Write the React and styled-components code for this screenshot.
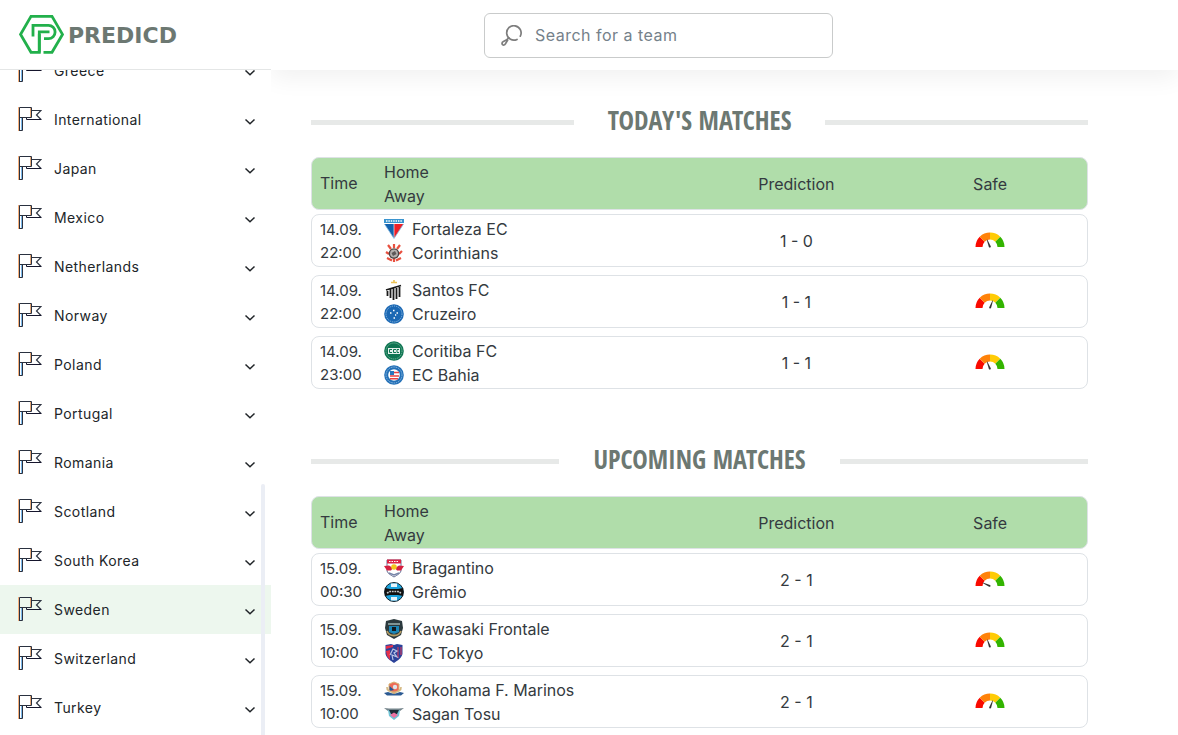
import React, { useLayoutEffect, useRef } from 'react'
import styled, { createGlobalStyle } from 'styled-components'


const GlobalStyle = createGlobalStyle`
  *, *::before, *::after {
    box-sizing: border-box;
  }

  body {
    margin: 0;
    background: #fff;
    color: #343a40;
    font-family: Inter, "Liberation Sans", sans-serif;
    font-size: 16px;
    line-height: 24px;
  }

  button, input {
    font: inherit;
    color: inherit;
  }
`

const Page = styled.div`
  display: grid;
  grid-template-columns: 271px minmax(0, 1fr);
  grid-template-rows: 70px minmax(0, 1fr);
  height: 100vh;
  overflow: hidden;
`

const Brand = styled.a`
  display: flex;
  align-items: center;
  padding-left: 19px;
  border-bottom: 1px solid #e4e6e6;
  background: #fff;
  z-index: 2;
`

const TopBar = styled.header`
  display: flex;
  align-items: center;
  padding: 0 24px 0 213px;
  background: #fff;
  box-shadow: 0 8px 24px rgba(0, 0, 0, 0.06);
  z-index: 1;
`

const SearchBox = styled.label`
  display: flex;
  align-items: center;
  gap: 13px;
  width: 349px;
  height: 45px;
  padding: 0 16px;
  border: 1px solid #c9cbcb;
  border-radius: 6px;
  color: #7d7d7d;
`

const SearchInput = styled.input`
  flex: 1;
  min-width: 0;
  padding: 0;
  border: 0;
  outline: 0;
  background: none;
  letter-spacing: 0.03em;

  &::placeholder {
    color: #75818a;
    opacity: 1;
  }
`

const Sidebar = styled.nav`
  position: relative;
  background: #fff;
  min-height: 0;
  z-index: 2;
`

const CountryList = styled.ul`
  height: 100%;
  margin: 0;
  padding: 0 0 16px;
  list-style: none;
  overflow-y: auto;
  scrollbar-width: none;
`

const CountryButton = styled.button`
  display: grid;
  grid-template-columns: 24px 1fr 12px;
  align-items: center;
  gap: 12px;
  width: 100%;
  height: 49px;
  padding: 0 15px 0 18px;
  border: 0;
  background: ${(props) => (props.$active ? '#edf7ee' : 'transparent')};
  color: #212529;
  font-size: 14px;
  letter-spacing: 0.03em;
  text-align: left;
`

const ScrollThumb = styled.div`
  position: absolute;
  right: 6px;
  bottom: 0;
  width: 4px;
  height: 251px;
  border-radius: 4px 4px 0 0;
  background: #ebeef5;
`

const Main = styled.main`
  display: flex;
  flex-direction: column;
  gap: 52px;
  padding: 32px 90px 0 40px;
  overflow: hidden;
`

const SectionTitle = styled.h2`
  display: flex;
  align-items: center;
  gap: 34px;
  height: 36px;
  margin: 0 0 19px;
  color: #6c7872;
  font-family: "Open Sans Condensed", "Liberation Sans Narrow", "Open Sans", sans-serif;
  font-size: 26px;
  font-weight: 700;
  line-height: 36px;
  text-transform: uppercase;

  &::before, &::after {
    content: '';
    flex: 1;
    height: 5px;
    margin-top: 4px;
    background: #e7e9e8;
  }
`

const Table = styled.table`
  display: grid;
  gap: 4px;

  thead {
    display: block;
  }

  tbody {
    display: grid;
    gap: 8px;
  }
`

const Row = styled.tr`
  display: grid;
  grid-template-columns: 72px 1fr 25% 25%;
  align-items: center;
  height: 53px;
  border: 1px solid #dee2e6;
  border-radius: 8px;
  background: ${(props) => (props.$head ? '#b0ddaa' : '#fff')};
`

const Cell = styled.td`
  display: flex;
  flex-direction: column;
  padding: 0;
  font-weight: 400;
  text-align: left;
`

const TimeCell = styled(Cell)`
  padding-left: 8px;
  font-size: ${(props) => (props.$head ? '16px' : '15px')};
  line-height: 23px;
`

const CenterCell = styled(Cell)`
  align-items: center;
`

const Team = styled.div`
  display: flex;
  align-items: center;
  gap: 8px;
`

const FlagIcon = () => (
  <svg width="24" height="25" viewBox="0 0 24 25" fill="none" strokeWidth="1">
    <path d="M0.5 0V24" stroke="#f6b07c" />
    <path d="M3.5 11V23" stroke="#7db9ea" />
    <path d="M12.5 1V10" stroke="#e3a878" />
    <path d="M1.5 24V0.5H13.5V10.5H1.5M4.5 11V23.5H1" stroke="#2a3140" />
    <path d="M14 3.5H23L18.5 8L23 12.5" stroke="#2f3542" strokeWidth="1.2" />
    <path d="M23.5 12.5H8.5V11" stroke="#15152c" />
  </svg>
)

const Chevron = () => (
  <svg width="12" height="12" viewBox="0 0 12 12" fill="none" stroke="#212529" strokeWidth="1.5">
    <path d="M1.5 5.5L6 9.8L10.5 5.5" />
  </svg>
)

const SearchIcon = () => (
  <svg width="21" height="21" viewBox="0 0 21 21" fill="none" stroke="currentColor" strokeWidth="1.7" strokeLinecap="round">
    <path d="M19.3 11.2A7.2 7.2 0 1 0 16 14.4" />
    <path d="M7.8 12.8L5.9 14.7M5.7 14.8L2 16.8A1.7 1.7 0 1 0 4.3 19L6.5 15.5Z" />
  </svg>
)

const Logo = () => (
  <svg width="170" height="42" viewBox="0 0 170 42" role="img" aria-label="Predicd">
    <g fill="none" stroke="#22b04b" strokeWidth="2.8">
      <path d="M20.3 20V38.3H12L1.6 20.4L12 2.3H33L43.5 20.4L33 38.3H24.5" />
      <path d="M14 22.5V11.4H29.5A6.6 6.6 0 0 1 29.5 24.6H25" />
      <path d="M20.3 38.5V17.8H30.5" />
    </g>
    <text x="49" y="29" fill="#6c7872" fontFamily="DejaVu Sans, sans-serif" fontSize="22" fontWeight="700">PREDICD</text>
  </svg>
)

const crests = {
  fortaleza: (
    <>
      <path d="M0 0H20V4H0Z" fill="#3a94cf" />
      <path d="M2 2H18" stroke="#fff" strokeWidth="1.4" strokeDasharray="1.4 1" />
      <path d="M0.5 5H9.7V19Z" fill="#1262ae" />
      <path d="M10.3 5H19.5L10.3 19Z" fill="#ee2028" />
      <path d="M0.5 5L10 19.5L19.5 5" fill="none" stroke="#7db4dd" strokeWidth="0.8" />
    </>
  ),
  corinthians: (
    <>
      <path d="M4 2L7 6M16 2L13 6M10 1V5M2 9L5 11M18 8L15 11M3 15L8 17.5M17 15L12 17.5M10 15V19" stroke="#e8503f" strokeWidth="2.2" />
      <circle cx="10" cy="10.5" r="5.3" fill="#4a4444" />
      <circle cx="10" cy="10.5" r="3.9" fill="#b5b0ae" />
      <path d="M7.5 10L11 8L12.5 11L9 13Z" fill="#5d5858" />
    </>
  ),
  santos: (
    <>
      <path d="M7 2.5H13M10 0V3" stroke="#ecc255" strokeWidth="1.6" />
      <path d="M3 6H17V11C17 16 14 18 10 20C6 18 3 16 3 11Z" fill="#fff" />
      <path d="M2 10L17 5.5M3.5 11V16M6.5 9V18M9.5 8V20M12.5 8V19M15.5 7V17" stroke="#191919" strokeWidth="1.8" />
    </>
  ),
  cruzeiro: (
    <>
      <circle cx="10" cy="10" r="9.8" fill="#1b68b4" />
      <circle cx="10" cy="10" r="8" fill="none" stroke="#8fbce2" strokeWidth="1" strokeDasharray="1.2 1" />
      <path d="M9 6.5h1.5M6 9h1.5M12.5 9h1.5M9.5 14h1.5M11 11h1.2" stroke="#fff" strokeWidth="1.5" />
    </>
  ),
  coritiba: (
    <>
      <circle cx="10" cy="10" r="9.8" fill="#0f7552" />
      <circle cx="10" cy="10" r="8" fill="none" stroke="#6fb59a" strokeDasharray="1.3 0.8" />
      <path d="M4 7H16V13H4Z" fill="#e5f1ec" />
      <path d="M8 8.5H5.5V11.5H8M12 8.5H9.5V11.5H12M15 8.5H13V11.5H15" fill="none" stroke="#0f7552" />
    </>
  ),
  bahia: (
    <>
      <circle cx="10" cy="10" r="9.8" fill="#2370b7" />
      <circle cx="10" cy="10" r="8" fill="none" stroke="#8ebbe2" strokeDasharray="1.4 0.9" />
      <circle cx="10" cy="10" r="5.8" fill="#fff" />
      <path d="M6 6H10V10H6Z" fill="#2677be" />
      <path d="M10 7.5H15M6 11H15M6 13.8H14" stroke="#e84343" strokeWidth="1.5" />
    </>
  ),
  bragantino: (
    <>
      <path d="M3 2H17V13C16 16 13 17 10 19C7 17 4 16 3 13Z" fill="#fff" stroke="#59618a" strokeWidth="0.9" />
      <path d="M3 1.5H17V5.5H3Z" fill="#de2444" />
      <path d="M5 3.5H15" stroke="#fff" strokeWidth="1.2" strokeDasharray="1.5 1" />
      <path d="M0 8L5 7.5L9 10L7 12.5H3ZM20 8L15 7.5L11 10L13 12.5H17Z" fill="#d5203f" />
      <circle cx="10" cy="9" r="2.8" fill="#f4c51c" />
      <path d="M5 15L10 17L15 15" fill="none" stroke="#7685a8" strokeWidth="1.5" />
    </>
  ),
  gremio: (
    <>
      <circle cx="10" cy="10" r="9.5" fill="#1ba2dc" stroke="#17222b" />
      <path d="M7 1.5H13V5H7ZM7 15H13V18.5H7Z" fill="#e8f4fb" />
      <path d="M1 6L6 7H14L19 6V14L14 13H6L1 14Z" fill="#111" />
      <path d="M3 11L6 9.5H14L17 11" fill="none" stroke="#c4c9cc" strokeWidth="1.7" strokeDasharray="1.8 0.8" />
    </>
  ),
  kawasaki: (
    <>
      <path d="M2 2L10 0L18 2L19 9L17 16L10 20L3 16L1 9Z" fill="#2c3a3e" />
      <path d="M4 4H16V6H4Z" fill="#7f9494" />
      <path d="M5 7H15V13L10 15L5 13Z" fill="#1a86b7" />
      <path d="M8 8H12V12H8Z" fill="#11181d" />
      <path d="M3 12C5 18 15 18 17 12" fill="none" stroke="#b39b63" strokeWidth="1.8" />
    </>
  ),
  tokyo: (
    <>
      <path d="M1.5 2L7 1L10 2L13 1L18.5 2V11C17 16 14 17 10 20C6 17 3 16 1.5 11Z" fill="#2b429a" />
      <path d="M2 3L9 2V4L2 6ZM2 8L6 7V17L3 13Z" fill="#e6304b" />
      <path d="M14 4V15M17 4V12" stroke="#c93b62" strokeWidth="1.2" />
      <path d="M6 12L9 6L13 8L10 10L13 14L8 12L9 17" fill="none" stroke="#b8c3e6" strokeWidth="1.2" />
    </>
  ),
  marinos: (
    <>
      <path d="M5 4L10 2L15 4V10L10 14L5 10Z" fill="#ee6c57" stroke="#d6b777" />
      <path d="M5.5 6L10 10L5.5 11Z" fill="#215896" />
      <circle cx="11" cy="7" r="2.2" fill="#dfe5e8" />
      <path d="M3 7C2 14 18 14 17 7" fill="none" stroke="#d4b880" strokeWidth="1.6" />
      <path d="M0 13L4 12L10 14L16 12L20 13L17 15.5H3Z" fill="#2c5a92" />
    </>
  ),
  sagan: (
    <>
      <path d="M0 4L5 4.5H15L20 4L16 7H4Z" fill="#73838a" />
      <path d="M4 6H16L15 12L10 16L5 12Z" fill="#6fc3d5" />
      <path d="M5 6H15L13 10H7Z" fill="#1d2b36" />
      <path d="M6 11L10 8.5L14 11L10 14Z" fill="#ec71a0" />
    </>
  ),
}

const Crest = ({ name }) => (
  <svg width="20" height="20" viewBox="0 0 20 20" aria-hidden="true">
    {crests[name]}
  </svg>
)

const Gauge = ({ angle }) => (
  <svg width="30" height="18" viewBox="0 0 30 18" role="img" aria-label="Safety">
    <g fill="none" strokeWidth="7">
      <path d="M4 15A11 11 0 0 1 7.2 7.2" stroke="#f90a00" />
      <path d="M7.2 7.2A11 11 0 0 1 15 4" stroke="#ff8209" />
      <path d="M15 4A11 11 0 0 1 22.8 7.2" stroke="#ffcb05" />
      <path d="M22.8 7.2A11 11 0 0 1 26 15" stroke="#33b400" />
    </g>
    <path d="M14.7 7L14 14.5A1 1 0 0 0 16 14.5L15.3 7Z" fill="#333" transform={`rotate(${angle} 15 15)`} />
  </svg>
)

const countries = [
  'Greece', 'International', 'Japan', 'Mexico', 'Netherlands', 'Norway', 'Poland',
  'Portugal', 'Romania', 'Scotland', 'South Korea', 'Sweden', 'Switzerland', 'Turkey',
]

const today = [
  { date: '14.09.', time: '22:00', home: ['Fortaleza EC', 'fortaleza'], away: ['Corinthians', 'corinthians'], score: '1 - 0', angle: -22 },
  { date: '14.09.', time: '22:00', home: ['Santos FC', 'santos'], away: ['Cruzeiro', 'cruzeiro'], score: '1 - 1', angle: 20 },
  { date: '14.09.', time: '23:00', home: ['Coritiba FC', 'coritiba'], away: ['EC Bahia', 'bahia'], score: '1 - 1', angle: -22 },
]

const upcoming = [
  { date: '15.09.', time: '00:30', home: ['Bragantino', 'bragantino'], away: ['Grêmio', 'gremio'], score: '2 - 1', angle: -66 },
  { date: '15.09.', time: '10:00', home: ['Kawasaki Frontale', 'kawasaki'], away: ['FC Tokyo', 'tokyo'], score: '2 - 1', angle: -20 },
  { date: '15.09.', time: '10:00', home: ['Yokohama F. Marinos', 'marinos'], away: ['Sagan Tosu', 'sagan'], score: '2 - 1', angle: 20 },
]

const Matches = ({ title, matches }) => (
  <section>
    <SectionTitle>{title}</SectionTitle>
    <Table>
      <thead>
        <Row $head>
          <TimeCell as="th" $head>Time</TimeCell>
          <Cell as="th">
            <span>Home</span>
            <span>Away</span>
          </Cell>
          <CenterCell as="th">Prediction</CenterCell>
          <CenterCell as="th">Safe</CenterCell>
        </Row>
      </thead>
      <tbody>
        {matches.map(({ date, time, home, away, score, angle }) => (
          <Row key={home[0]}>
            <TimeCell>
              <span>{date}</span>
              <span>{time}</span>
            </TimeCell>
            <Cell>
              {[home, away].map(([name, crest]) => (
                <Team key={name}>
                  <Crest name={crest} />
                  {name}
                </Team>
              ))}
            </Cell>
            <CenterCell>{score}</CenterCell>
            <CenterCell><Gauge angle={angle} /></CenterCell>
          </Row>
        ))}
      </tbody>
    </Table>
  </section>
)

const App = () => {
  const listRef = useRef(null)

  // open the list half a row down
  useLayoutEffect(() => {
    listRef.current.scrollTop = 24
  }, [])

  return (
    <Page>
      <GlobalStyle />
      <Brand href="#"><Logo /></Brand>
      <TopBar>
        <SearchBox>
          <SearchIcon />
          <SearchInput type="text" placeholder="Search for a team" aria-label="Search for a team" />
        </SearchBox>
      </TopBar>
      <Sidebar>
        <CountryList ref={listRef}>
          {countries.map((country) => (
            <li key={country}>
              <CountryButton type="button" $active={country === 'Sweden'}>
                <FlagIcon />
                {country}
                <Chevron />
              </CountryButton>
            </li>
          ))}
        </CountryList>
        <ScrollThumb />
      </Sidebar>
      <Main>
        <Matches title="Today's matches" matches={today} />
        <Matches title="Upcoming matches" matches={upcoming} />
      </Main>
    </Page>
  )
}

export default App
